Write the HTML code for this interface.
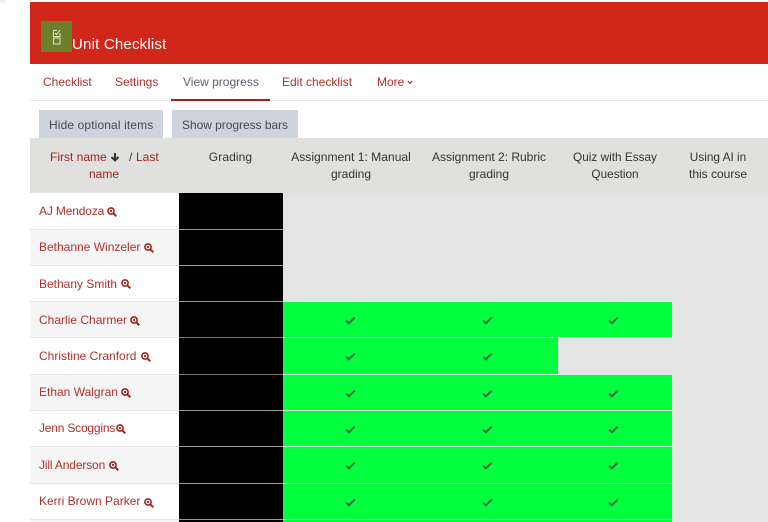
<!DOCTYPE html>
<html><head><meta charset="utf-8">
<style>
html,body{margin:0;padding:0;background:#fff;width:768px;height:522px;overflow:hidden}
body{position:relative;font-family:"Liberation Sans",sans-serif;font-size:12px;-webkit-font-smoothing:antialiased}
.a{position:absolute}
.t{position:absolute;white-space:nowrap;line-height:17px}
.r{color:#b0302a}
.c{text-align:center;color:#333;transform:translateX(-50%)}
.ck{position:absolute;width:11px;height:9px}
.m{position:absolute;width:10px;height:10px}
</style></head><body>
<div class="a" style="left:0;top:0;width:6px;height:3px;background:#eef0f4"></div>
<div class="a" style="left:30px;top:2px;width:738px;height:62px;background:#d0271a"></div>
<div class="a" style="left:41px;top:21px;width:31px;height:31px;background:#6d7f2b"></div>
<svg class="a" style="left:52px;top:28px" width="10" height="17" viewBox="0 0 10 17" fill="none" stroke="#dfe5c8" stroke-width="1"><path d="M1.5 2.5H5M1.5 2.5V8.5H8V5M3 5L4.5 6.5L8 2"/><rect x="1.5" y="10" width="6.5" height="6"/></svg>
<div class="t" style="left:72px;top:36px;color:#fff;font-size:15px;letter-spacing:.2px">Unit Checklist</div>

<div class="t r" style="left:43px;top:74px">Checklist</div>
<div class="t r" style="left:115px;top:74px">Settings</div>
<div class="t" style="left:183px;top:74px;color:#5b626b">View progress</div>
<div class="t r" style="left:282px;top:74px">Edit checklist</div>
<div class="t r" style="left:377px;top:74px">More</div>
<svg class="a" style="left:407px;top:80px" width="6" height="5" viewBox="0 0 6 5" fill="none" stroke="#b0302a" stroke-width="1.2"><path d="M.8 1L3 3.4L5.2 1"/></svg>
<div class="a" style="left:30px;top:100px;width:738px;height:1px;background:#e6e7ea"></div>
<div class="a" style="left:171px;top:99px;width:99px;height:2px;background:#a5211a"></div>

<div class="a" style="left:39px;top:110px;width:124px;height:28px;background:#ced4de"></div>
<div class="a" style="left:172px;top:110px;width:126px;height:28px;background:#ced4de"></div>
<div class="t" style="left:49px;top:117px;color:#444a52;letter-spacing:.12px">Hide optional items</div>
<div class="t" style="left:182px;top:117px;color:#444a52;letter-spacing:-.04px">Show progress bars</div>

<div class="a" style="left:30px;top:138px;width:738px;height:55px;background:#e0e0de"></div>
<div class="t" style="left:50px;top:149px;color:#a5211a">First name</div>
<svg class="a" style="left:110px;top:152px" width="10" height="10" viewBox="0 0 10 10" fill="none" stroke="#333" stroke-width="2"><path d="M5 1V8M1.5 5L5 8.5L8.5 5"/></svg>
<div class="t" style="left:129px;top:149px;color:#333">/</div>
<div class="t" style="left:136px;top:149px;color:#a5211a">Last</div>
<div class="t" style="left:89px;top:166px;color:#a5211a">name</div>
<div class="t c" style="left:230.5px;top:149px;letter-spacing:.1px">Grading</div>
<div class="t c" style="left:351px;top:149px;font-size:12.1px">Assignment 1: Manual</div>
<div class="t c" style="left:351px;top:166px">grading</div>
<div class="t c" style="left:489px;top:149px;font-size:12.1px;letter-spacing:-.05px">Assignment 2: Rubric</div>
<div class="t c" style="left:489px;top:166px">grading</div>
<div class="t c" style="left:615px;top:149px;font-size:11.8px">Quiz with Essay</div>
<div class="t c" style="left:615px;top:166px;font-size:11.8px">Question</div>
<div class="t c" style="left:718px;top:149px;font-size:11.8px">Using AI in</div>
<div class="t c" style="left:718px;top:166px">this course</div>

<!-- zebra -->
<div class="a" style="left:30px;top:229px;width:149px;height:37px;background:#f5f5f5"></div>
<div class="a" style="left:30px;top:302px;width:149px;height:36px;background:#f5f5f5"></div>
<div class="a" style="left:30px;top:375px;width:149px;height:36px;background:#f5f5f5"></div>
<div class="a" style="left:30px;top:447px;width:149px;height:37px;background:#f5f5f5"></div>
<div class="a" style="left:30px;top:520px;width:149px;height:2px;background:#f5f5f5"></div>

<!-- grid -->
<div class="a" style="left:283px;top:193px;width:485px;height:329px;background:#e4e4e4"></div>
<div class="a" style="left:179px;top:193px;width:104px;height:329px;background:#000"></div>
<div class="a" style="left:283px;top:302px;width:389px;height:35px;background:#00ff3c"></div>
<div class="a" style="left:283px;top:338px;width:275px;height:36px;background:#00ff3c"></div>
<div class="a" style="left:283px;top:375px;width:389px;height:35px;background:#00ff3c"></div>
<div class="a" style="left:283px;top:411px;width:389px;height:35px;background:#00ff3c"></div>
<div class="a" style="left:283px;top:447px;width:389px;height:36px;background:#00ff3c"></div>
<div class="a" style="left:283px;top:484px;width:389px;height:35px;background:#00ff3c"></div>
<div class="a" style="left:283px;top:520px;width:389px;height:2px;background:#00ff3c"></div>

<!-- row lines -->
<div class="a" style="left:30px;top:229px;width:738px;height:1px;background:#e6e6e6"></div>
<div class="a" style="left:30px;top:265px;width:738px;height:1px;background:#e6e6e6"></div>
<div class="a" style="left:30px;top:301px;width:738px;height:1px;background:#e6e6e6"></div>
<div class="a" style="left:30px;top:337px;width:738px;height:1px;background:#e6e6e6"></div>
<div class="a" style="left:30px;top:374px;width:738px;height:1px;background:#e6e6e6"></div>
<div class="a" style="left:30px;top:410px;width:738px;height:1px;background:#e6e6e6"></div>
<div class="a" style="left:30px;top:446px;width:738px;height:1px;background:#e6e6e6"></div>
<div class="a" style="left:30px;top:483px;width:738px;height:1px;background:#e6e6e6"></div>
<div class="a" style="left:30px;top:519px;width:738px;height:1px;background:#e6e6e6"></div>
<div class="a" style="left:179px;top:229px;width:104px;height:1px;background:#999"></div>
<div class="a" style="left:179px;top:265px;width:104px;height:1px;background:#999"></div>
<div class="a" style="left:179px;top:301px;width:104px;height:1px;background:#999"></div>
<div class="a" style="left:179px;top:337px;width:104px;height:1px;background:#777"></div>
<div class="a" style="left:179px;top:374px;width:104px;height:1px;background:#777"></div>
<div class="a" style="left:179px;top:410px;width:104px;height:1px;background:#999"></div>
<div class="a" style="left:179px;top:446px;width:104px;height:1px;background:#999"></div>
<div class="a" style="left:179px;top:483px;width:104px;height:1px;background:#999"></div>
<div class="a" style="left:179px;top:519px;width:104px;height:1px;background:#999"></div>

<svg width="0" height="0" style="position:absolute"><defs>
<g id="mg" fill="none" stroke="#a5211a"><circle cx="4" cy="4" r="3.1" stroke-width="1.6"/><path d="M6.4 6.4L9.3 9.3" stroke-width="2"/><circle cx="4" cy="4" r="1.1" fill="#a5211a" stroke="none"/></g>
<path id="ck" fill="none" stroke="#3c6b45" stroke-width="2" d="M1 4.6L3.9 7.4L9.8 1.4"/>
</defs></svg>

<div class="t r" style="left:39px;top:203px;letter-spacing:-.15px">AJ Mendoza</div><svg class="m" style="left:107px;top:207px"><use href="#mg"/></svg>
<div class="t r" style="left:39px;top:239px">Bethanne Winzeler</div><svg class="m" style="left:144px;top:243px"><use href="#mg"/></svg>
<div class="t r" style="left:39px;top:276px">Bethany Smith</div><svg class="m" style="left:121px;top:279px"><use href="#mg"/></svg>
<div class="t r" style="left:39px;top:312px">Charlie Charmer</div><svg class="m" style="left:130px;top:316px"><use href="#mg"/></svg>
<div class="t r" style="left:39px;top:348px">Christine Cranford</div><svg class="m" style="left:141px;top:352px"><use href="#mg"/></svg>
<div class="t r" style="left:39px;top:384px">Ethan Walgran</div><svg class="m" style="left:121px;top:388px"><use href="#mg"/></svg>
<div class="t r" style="left:39px;top:420px;letter-spacing:-.2px">Jenn Scoggins</div><svg class="m" style="left:116px;top:424px"><use href="#mg"/></svg>
<div class="t r" style="left:39px;top:457px;letter-spacing:-.15px">Jill Anderson</div><svg class="m" style="left:109px;top:461px"><use href="#mg"/></svg>
<div class="t r" style="left:39px;top:493px">Kerri Brown Parker</div><svg class="m" style="left:144px;top:498px"><use href="#mg"/></svg>

<svg class="ck" style="left:345px;top:316px"><use href="#ck"/></svg><svg class="ck" style="left:482px;top:316px"><use href="#ck"/></svg><svg class="ck" style="left:608px;top:316px"><use href="#ck"/></svg>
<svg class="ck" style="left:345px;top:352px"><use href="#ck"/></svg><svg class="ck" style="left:482px;top:352px"><use href="#ck"/></svg>
<svg class="ck" style="left:345px;top:389px"><use href="#ck"/></svg><svg class="ck" style="left:482px;top:389px"><use href="#ck"/></svg><svg class="ck" style="left:608px;top:389px"><use href="#ck"/></svg>
<svg class="ck" style="left:345px;top:425px"><use href="#ck"/></svg><svg class="ck" style="left:482px;top:425px"><use href="#ck"/></svg><svg class="ck" style="left:608px;top:425px"><use href="#ck"/></svg>
<svg class="ck" style="left:345px;top:461px"><use href="#ck"/></svg><svg class="ck" style="left:482px;top:461px"><use href="#ck"/></svg><svg class="ck" style="left:608px;top:461px"><use href="#ck"/></svg>
<svg class="ck" style="left:345px;top:498px"><use href="#ck"/></svg><svg class="ck" style="left:482px;top:498px"><use href="#ck"/></svg><svg class="ck" style="left:608px;top:498px"><use href="#ck"/></svg>
</body></html>
